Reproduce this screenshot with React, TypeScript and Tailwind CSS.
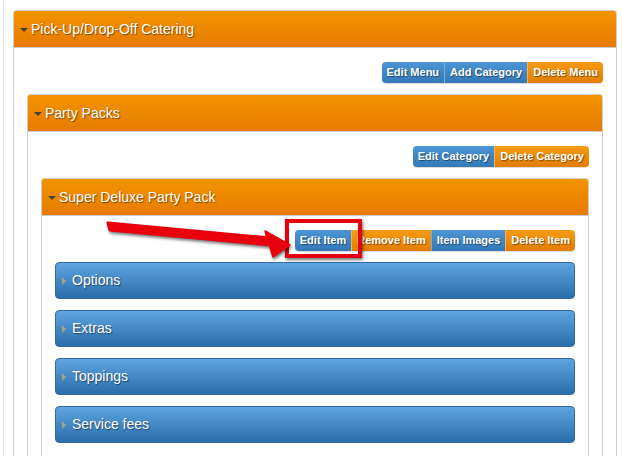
import type { ReactNode } from "react";

type Btn = { label: string; color: "blue" | "orange" };

const btnColor = {
  blue: "bg-gradient-to-b from-[#4c95d4] to-[#3478b7] border-l-[#7aaedc]",
  orange: "bg-gradient-to-b from-[#f59b14] to-[#e37d00] border-l-[#f7b55a]",
};

function ButtonGroup({ buttons }: { buttons: Btn[] }) {
  return (
    <div className="flex justify-end mb-[11px]">
      <div className="flex h-[21px] rounded-[4px] overflow-hidden shadow-[0_1px_1px_rgba(0,0,0,0.15)]">
        {buttons.map((b, i) => (
          <span
            key={b.label}
            className={`flex items-center px-[5px] text-[11px] font-bold text-white [text-shadow:1px_1px_1px_rgba(0,0,0,0.45)] ${btnColor[b.color]} ${
              i > 0 ? "border-l" : ""
            }`}
          >
            {b.label}
          </span>
        ))}
      </div>
    </div>
  );
}

function Panel({
  title,
  buttons,
  children,
}: {
  title: string;
  buttons: Btn[];
  children: ReactNode;
}) {
  return (
    <div className="border border-[#cfcfcf] rounded-t-[3px]">
      <div className="h-[37px] flex items-center pl-[6px] bg-gradient-to-b from-[#f39400] to-[#e67a00] border-b border-[#c9c9c9] rounded-t-[2px]">
        <span className="w-0 h-0 border-l-[4px] border-r-[4px] border-t-[4px] border-l-transparent border-r-transparent border-t-[#4a4036] mr-[3px] mt-[1px]" />
        <span className="text-[14px] text-white [text-shadow:1px_1px_1px_rgba(0,0,0,0.45)]">
          {title}
        </span>
      </div>
      <div className="px-[13px] pt-[14px]">
        <ButtonGroup buttons={buttons} />
        {children}
      </div>
    </div>
  );
}

function Bar({ label }: { label: string }) {
  return (
    <div className="h-[37px] flex items-center pl-[6px] rounded-[4px] border border-[#3569a0] bg-gradient-to-b from-[#5ea5e0] to-[#2a6dab]">
      <span className="w-0 h-0 border-t-[4px] border-b-[4px] border-l-[4px] border-t-transparent border-b-transparent border-l-[#a8a08e] mr-[6px]" />
      <span className="text-[14px] text-white [text-shadow:1px_1px_1px_rgba(0,0,0,0.45)]">
        {label}
      </span>
    </div>
  );
}

export default function App() {
  return (
    <div className="relative w-[622px] h-[456px] overflow-hidden bg-white font-['Liberation_Sans',Arial,sans-serif]">
      <div className="ml-[3px] h-full border-l border-[#e2e2e2] pl-[9px] pr-[5px] pt-[10px]">
        <Panel
          title="Pick-Up/Drop-Off Catering"
          buttons={[
            { label: "Edit Menu", color: "blue" },
            { label: "Add Category", color: "blue" },
            { label: "Delete Menu", color: "orange" },
          ]}
        >
          <Panel
            title="Party Packs"
            buttons={[
              { label: "Edit Category", color: "blue" },
              { label: "Delete Category", color: "orange" },
            ]}
          >
            <Panel
              title="Super Deluxe Party Pack"
              buttons={[
                { label: "Edit Item", color: "blue" },
                { label: "Remove Item", color: "orange" },
                { label: "Item Images", color: "blue" },
                { label: "Delete Item", color: "orange" },
              ]}
            >
              <div className="flex flex-col gap-[11px] pb-[20px]">
                <Bar label="Options" />
                <Bar label="Extras" />
                <Bar label="Toppings" />
                <Bar label="Service fees" />
              </div>
            </Panel>
          </Panel>
        </Panel>
      </div>

      {/* annotation: red highlight box */}
      <div className="absolute left-[285px] top-[219px] w-[77px] h-[39px] border-[4px] border-[#e8000d] shadow-[1px_2px_3px_rgba(0,0,0,0.55)]" />

      {/* annotation: arrow */}
      <svg
        className="absolute left-0 top-0 pointer-events-none"
        width="622"
        height="456"
        style={{ filter: "drop-shadow(1px 2px 1.5px rgba(0,0,0,0.55))" }}
      >
        <path
          d="M108 223 L110 230 L271 245 L270 238 Z"
          fill="#e8000d"
          stroke="#e8000d"
          strokeWidth="3"
          strokeLinejoin="round"
        />
        <polygon points="265,231 273,257 290,245" fill="#e8000d" stroke="#e8000d" strokeWidth="1.5" strokeLinejoin="round" />
      </svg>
    </div>
  );
}
